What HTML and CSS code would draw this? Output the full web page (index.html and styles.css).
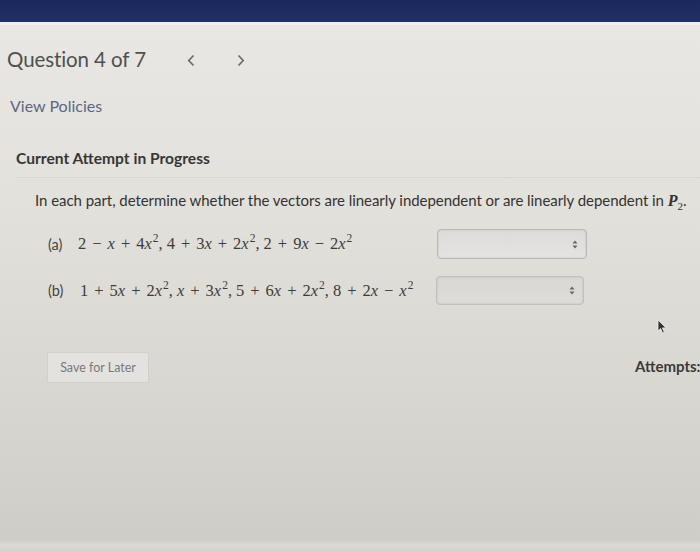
FILE: index.html
```html
<!DOCTYPE html>
<html>
<head>
<meta charset="utf-8">
<link rel="stylesheet" href="styles.css">
</head>
<body>
<div class="topbar"></div>
<div class="page">
  <div class="qhead">
    <span class="qtitle">Question 4 of 7</span>
    <span class="arrow prev"><svg width="8" height="13" viewBox="0 0 8 13"><path d="M6.5 1.5 L1.8 6.5 L6.5 11.5" fill="none" stroke="#6a6a6a" stroke-width="1.7"/></svg></span>
    <span class="arrow next"><svg width="8" height="13" viewBox="0 0 8 13"><path d="M1.5 1.5 L6.2 6.5 L1.5 11.5" fill="none" stroke="#6a6a6a" stroke-width="1.7"/></svg></span>
  </div>
  <div class="policies">View Policies</div>
  <div class="attempt">Current Attempt in Progress</div>
  <div class="rule"></div>
  <div class="prompt">In each part, determine whether the vectors are linearly independent or are linearly dependent in <b class="pp"><i>P</i><sub>2</sub></b>.</div>
  <div class="qrow row-a">
    <span class="lbl">(a)</span>
    <span class="math">2<span class="op">−</span><i>x</i><span class="op">+</span>4<i>x</i><sup>2</sup><span class="cm">,</span>4<span class="op">+</span>3<i>x</i><span class="op">+</span>2<i>x</i><sup>2</sup><span class="cm">,</span>2<span class="op">+</span>9<i>x</i><span class="op">−</span>2<i>x</i><sup>2</sup></span>
    <span class="sel sel-a"><span class="updown"><svg width="6" height="9" viewBox="0 0 6 9"><path d="M3 0.5 L5.5 3.5 L0.5 3.5 Z M3 8.5 L5.5 5.5 L0.5 5.5 Z" fill="#666"/></svg></span></span>
  </div>
  <div class="qrow row-b">
    <span class="lbl">(b)</span>
    <span class="math">1<span class="op">+</span>5<i>x</i><span class="op">+</span>2<i>x</i><sup>2</sup><span class="cm">,</span><i>x</i><span class="op">+</span>3<i>x</i><sup>2</sup><span class="cm">,</span>5<span class="op">+</span>6<i>x</i><span class="op">+</span>2<i>x</i><sup>2</sup><span class="cm">,</span>8<span class="op">+</span>2<i>x</i><span class="op">−</span><i>x</i><sup>2</sup></span>
    <span class="sel sel-b"><span class="updown"><svg width="6" height="9" viewBox="0 0 6 9"><path d="M3 0.5 L5.5 3.5 L0.5 3.5 Z M3 8.5 L5.5 5.5 L0.5 5.5 Z" fill="#666"/></svg></span></span>
  </div>
  <div class="footer">
    <span class="save">Save for Later</span>
    <span class="attempts">Attempts:</span>
  </div>
</div>
<svg class="cursor" width="12" height="16" viewBox="0 0 12 16"><path d="M1 1 L1 12 L3.6 9.6 L5.6 14 L7.4 13.2 L5.4 8.9 L9 8.9 Z" fill="#333" stroke="#eee" stroke-width="0.8"/></svg>
</body>
</html>
```
FILE: styles.css
```css
html, body {
  margin: 0;
  padding: 0;
  height: 552px;
  overflow: hidden;
}
body {
  position: relative;
  font-family: Lato, "Open Sans", sans-serif;
  background: linear-gradient(180deg, #e9e8e4 0px, #e3e1dc 200px, #d8d6d0 400px, #cfcdc7 540px, #dcdad6 545px, #d4d2cd 552px);
}
.topbar {
  height: 22px;
  background: linear-gradient(180deg, #1a285c, #233067);
  border-bottom: 3px solid #f0efec;
}
.page {
  position: relative;
}
.qhead {
  display: flex;
  align-items: center;
  height: 26px;
  margin-top: 21px;
  padding-left: 7px;
}
.qtitle {
  font-size: 20.5px;
  color: #505050;
  letter-spacing: -0.1px;
}
.arrow {
  display: flex;
  margin-top: 3px;
}
.prev { margin-left: 41px; }
.next { margin-left: 42px; }
.policies {
  margin-top: 23px;
  padding-left: 10px;
  height: 20px;
  line-height: 20px;
  font-size: 16px;
  color: #5a6884;
  border-top: 1px solid #e6e4e0;
}
.attempt {
  margin-top: 32px;
  padding-left: 16px;
  height: 20px;
  line-height: 20px;
  font-size: 15.6px;
  font-weight: bold;
  color: #363636;
}
.rule {
  margin: 9px 0 0 16px;
  height: 1px;
  background: #d8d6d1;
}
.prompt {
  margin-top: 12px;
  padding-left: 35px;
  height: 20px;
  line-height: 20px;
  font-size: 15px;
  color: #333;
  letter-spacing: -0.05px;
  white-space: nowrap;
}
.pp {
  font-family: "Liberation Serif", serif;
  font-size: 16px;
}
.pp sub { font-size: 11px; font-weight: normal; }
.qrow {
  display: grid;
  grid-template-columns: 30px 359px 150px;
  align-items: center;
  padding-left: 48px;
}
.row-a { margin-top: 19px; height: 30px; }
.row-b { margin-top: 17px; height: 29px; grid-template-columns: 32px 356px 148px; }
.lbl {
  font-size: 14.5px;
  color: #444;
}
.math {
  font-family: "Liberation Serif", serif;
  font-size: 16.5px;
  color: #3c3c3c;
  white-space: nowrap;
}
.op { margin: 0 6px; }
.cm { margin-right: 4px; }
.math sup { font-size: 11.5px; line-height: 0; vertical-align: 7px; margin-left: 1px; }
.sel {
  box-sizing: border-box;
  height: 100%;
  border: 1px solid #b6b8bc;
  border-radius: 4px;
  background: linear-gradient(180deg, #dcdcdb, #e4e3e0);
  box-shadow: inset 0 0 2px rgba(120,125,140,0.35);
  display: flex;
  align-items: center;
  justify-content: flex-end;
  padding-right: 8px;
}
.sel-b { background: linear-gradient(180deg, #d9d8d4, #dedcd8); border-color: #c0c0c0; }
.updown { display: flex; }
.footer {
  display: flex;
  justify-content: space-between;
  align-items: center;
  margin-top: 47px;
  padding-left: 47px;
}
.save {
  box-sizing: border-box;
  width: 102px;
  height: 31px;
  line-height: 29px;
  border: 1px solid #d2d0cb;
  border-radius: 2px;
  text-align: center;
  font-size: 12.5px;
  color: #7a7a7a;
  background: #e3e2de;
}
.attempts {
  font-size: 15px;
  font-weight: bold;
  color: #3a3a3a;
  width: 65px;
  white-space: nowrap;
  margin-top: -4px;
}
.cursor {
  position: absolute;
  left: 657px;
  top: 319px;
}
```
